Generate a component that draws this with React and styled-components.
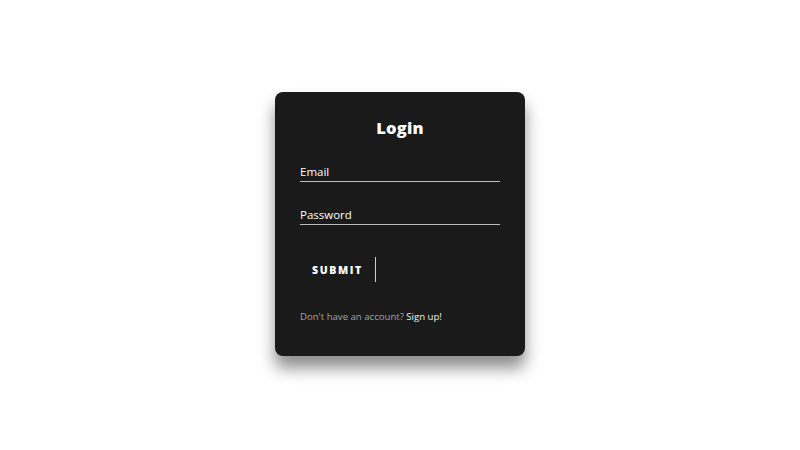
import React from "react";
import styled, { createGlobalStyle } from "styled-components";

const Global = createGlobalStyle`
  html, body { margin: 0; padding: 0; background: #ffffff; }
  body { font-family: "Open Sans", "Noto Sans", sans-serif; }
  * { box-sizing: border-box; }
`;

const Page = styled.div`
  width: 800px;
  height: 450px;
  display: flex;
  align-items: flex-start;
  justify-content: center;
  padding-top: 92px;
`;

const Card = styled.form`
  width: 250px;
  height: 264px;
  background: #1a1a1a;
  border-radius: 8px;
  box-shadow: 0 12px 16px rgba(0, 0, 0, 0.45);
  padding: 24px 25px 0;
  display: flex;
  flex-direction: column;
`;

const Title = styled.h2`
  margin: 0;
  text-align: center;
  color: #ffffff;
  font-size: 16.5px;
  font-weight: 800;
  line-height: 24px;
  letter-spacing: 0.2px;
`;

const Field = styled.label`
  display: block;
  margin-top: ${(p) => p.$top}px;
  border-bottom: 1px solid #bdbdbd;
  color: #ffffff;
  font-size: 11.5px;
  line-height: 17px;
  padding-bottom: 1px;
`;

const Submit = styled.button`
  align-self: flex-start;
  margin-top: 32px;
  background: transparent;
  border: none;
  border-right: 1px solid #cfcfcf;
  color: #ffffff;
  font-family: inherit;
  font-size: 10.5px;
  font-weight: 800;
  letter-spacing: 1.6px;
  padding: 5px 12px 5px 12px;
  line-height: 14px;
  height: 25px;
`;

const Footer = styled.p`
  margin: 28px 0 0;
  color: #a3a3a3;
  font-size: 9.6px;
  line-height: 14px;
`;

const Link = styled.span`
  color: #f0f0f0;
`;

export default function App() {
  return (
    <>
      <Global />
      <Page>
        <Card onSubmit={(e) => e.preventDefault()}>
          <Title>Login</Title>
          <Field $top={23}>Email</Field>
          <Field $top={24}>Password</Field>
          <Submit type="submit">SUBMIT</Submit>
          <Footer>
            Don't have an account? <Link>Sign up!</Link>
          </Footer>
        </Card>
      </Page>
    </>
  );
}
